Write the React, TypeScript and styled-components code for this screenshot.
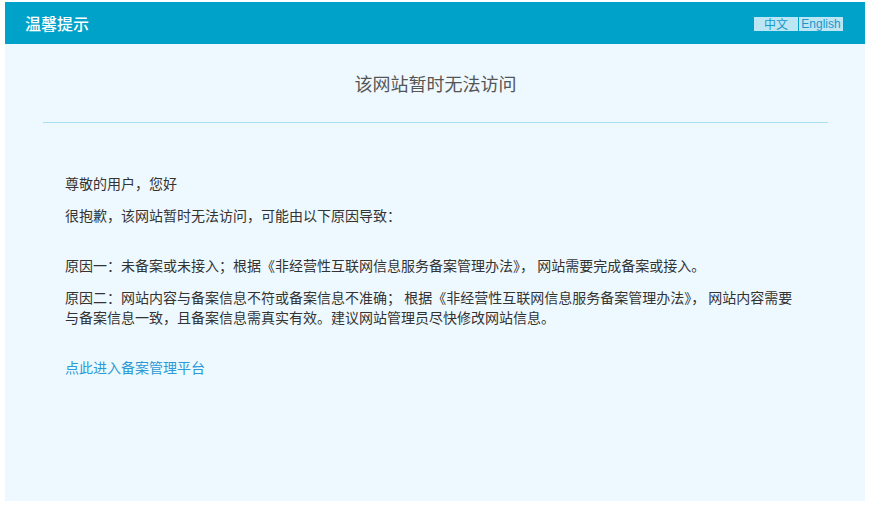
import styled, { createGlobalStyle } from "styled-components";

const GlobalStyle = createGlobalStyle`
  html, body {
    margin: 0;
    padding: 0;
    background: #ffffff;
  }

  body {
    font-family: "Noto Sans CJK SC", "Liberation Sans", sans-serif;
  }
`;

const App = () => {
  return (
    <>
      <GlobalStyle />
      <Wrapper>
        <Header>
          <h1>温馨提示</h1>

          <LangSwitch>
            <LangButton $active>中文</LangButton>
            <LangButton>English</LangButton>
          </LangSwitch>
        </Header>

        <Body>
          <Title>该网站暂时无法访问</Title>

          <Content>
            <Group>
              <Para>尊敬的用户，您好</Para>
              <Para>很抱歉，该网站暂时无法访问，可能由以下原因导致：</Para>
            </Group>

            <Group>
              <Para>
                原因一：未备案或未接入；根据《非经营性互联网信息服务备案管理办法》，
                网站需要完成备案或接入。
              </Para>
              <Para>
                原因二：网站内容与备案信息不符或备案信息不准确； 根据《非经营性互联网信息服务备案管理办法》，
                网站内容需要与备案信息一致，且备案信息需真实有效。建议网站管理员尽快修改网站信息。
              </Para>
            </Group>

            <Link href="#">点此进入备案管理平台</Link>
          </Content>
        </Body>
      </Wrapper>
    </>
  );
};

export default App;

const Wrapper = styled.div`
  width: 860px;
  height: 499px;
  margin: 2px 0 0 5px;
  background-color: #eef9ff;
  display: flex;
  flex-direction: column;
`;

const Header = styled.div`
  height: 42px;
  flex-shrink: 0;
  background-color: #00a2ca;
  display: flex;
  align-items: center;
  justify-content: space-between;
  padding: 0 22px 0 20px;
  box-sizing: border-box;

  h1 {
    margin: 0;
    font-size: 16px;
    font-weight: 500;
    color: #ffffff;
  }
`;

const LangSwitch = styled.div`
  display: flex;
  gap: 1px;
  margin-top: 1px;
`;

const LangButton = styled.span<{ $active?: boolean }>`
  display: flex;
  align-items: center;
  justify-content: center;
  width: 44px;
  height: 14px;
  background-color: #bde6f4;
  color: #1898cc;
  font-size: 12px;
  font-family: ${(p) =>
    p.$active
      ? `"Noto Sans CJK SC", sans-serif`
      : `"Liberation Sans", sans-serif`};
  line-height: 14px;
  cursor: pointer;
`;

const Body = styled.div`
  flex: 1;
  padding: 0 37px 0 38px;
`;

const Title = styled.h2`
  margin: 0;
  padding: 26px 0 26px;
  line-height: 26px;
  font-size: 18px;
  font-weight: normal;
  color: #555555;
  text-align: center;
  border-bottom: 1px solid #a8dff2;
`;

const Content = styled.div`
  padding: 50px 0 0 22px;
  width: 740px;
  display: flex;
  flex-direction: column;
  gap: 30px;
`;

const Group = styled.div`
  display: flex;
  flex-direction: column;
  gap: 12px;
`;

const Para = styled.p`
  margin: 0;
  font-size: 14px;
  line-height: 20px;
  color: #333333;
`;

const Link = styled.a`
  font-size: 14px;
  line-height: 20px;
  color: #2b9ad6;
  text-decoration: none;
  align-self: flex-start;
`;
